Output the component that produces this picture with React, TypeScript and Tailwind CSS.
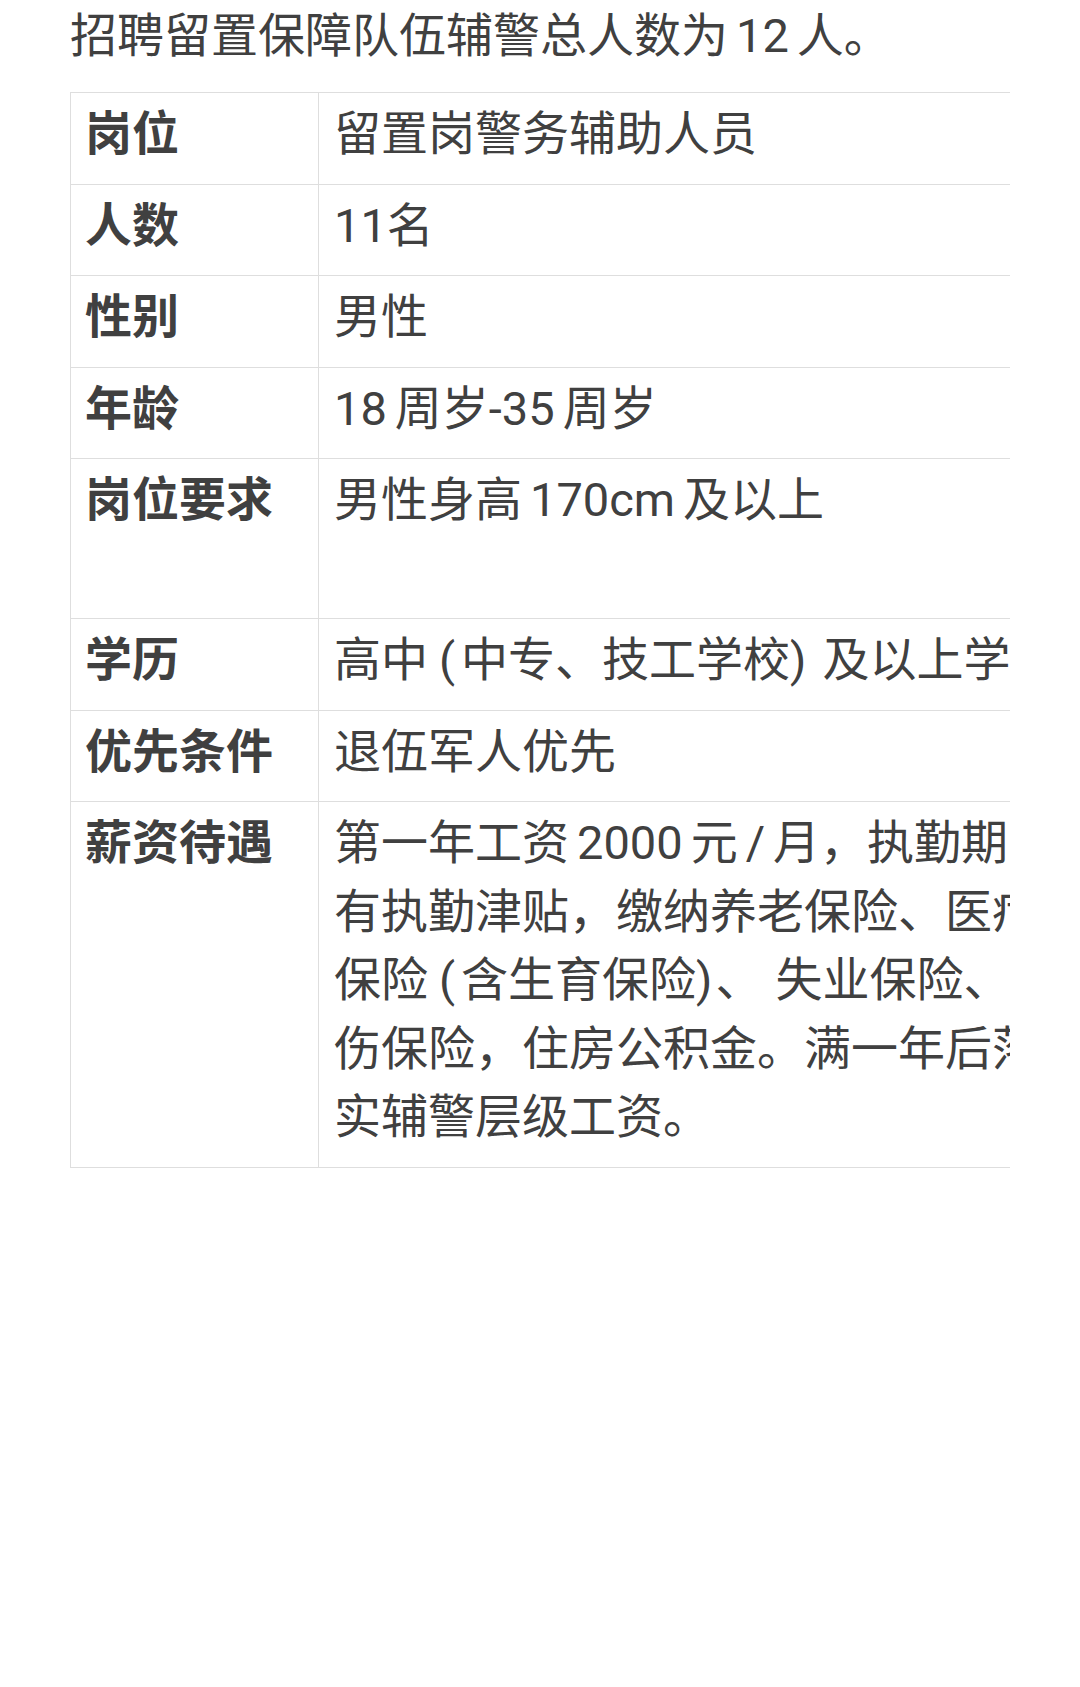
import { Fragment, type ReactNode } from "react";

// "[n]" marks an n-pixel gap, like the narrow space the phone puts
// between Chinese characters and Latin runs / half-width brackets
const GAP: Record<string, string> = {
  "3": "w-[3px]",
  "6": "w-[6px]",
  "8": "w-[8px]",
  "11": "w-[11px]",
  "13": "w-[13px]",
  "16": "w-[16px]",
};

function spaced(s: string): ReactNode {
  return s.split(/\[(\d+)\]/).map((part, i) =>
    i % 2 === 1 ? (
      <span key={i} className={`inline-block ${GAP[part]}`} />
    ) : (
      <Fragment key={i}>{part}</Fragment>
    )
  );
}

const rows: { label: string; lines: string[] }[] = [
  { label: "岗位", lines: ["留置岗警务辅助人员"] },
  { label: "人数", lines: ["11名"] },
  { label: "性别", lines: ["男性"] },
  { label: "年龄", lines: ["18[8]周岁-35[8]周岁"] },
  { label: "岗位要求", lines: ["男性身高[8]170cm[8]及以上", "\u00a0"] },
  { label: "学历", lines: ["高中[11]([6]中专、技工学校)[16]及以上学历"] },
  { label: "优先条件", lines: ["退伍军人优先"] },
  {
    label: "薪资待遇",
    lines: [
      "第一年工资[8]2000[8]元[8]/[8]月，执勤期间",
      "有执勤津贴，缴纳养老保险、医疗",
      "保险[11]([6]含生育保险)[3]、[13]失业保险、工",
      "伤保险，住房公积金。满一年后落",
      "实辅警层级工资。",
    ],
  },
];

export default function App() {
  return (
    <div className="min-h-screen bg-white px-[70px] text-[#404040] font-['Roboto','Noto_Sans_CJK_SC',sans-serif]">
      <p className="mt-[2px] mb-[22px] text-[47px] leading-[68px] whitespace-nowrap">
        {spaced("招聘留置保障队伍辅警总人数为[8]12[8]人。")}
      </p>

      <div className="overflow-hidden">
        <table className="border-collapse w-max text-[47px] leading-[68.5px]">
          <tbody>
            {rows.map((r) => (
              <tr key={r.label}>
                <td className="w-[248px] border border-[#dedede] px-[14px] pt-[7px] pb-[15px] align-top font-bold whitespace-nowrap">
                  {r.label}
                </td>
                <td className="w-[860px] border border-[#dedede] px-[15px] pt-[7px] pb-[15px] align-top whitespace-nowrap">
                  {r.lines.map((l, i) => (
                    <div key={i}>{spaced(l)}</div>
                  ))}
                </td>
              </tr>
            ))}
          </tbody>
        </table>
      </div>
    </div>
  );
}
